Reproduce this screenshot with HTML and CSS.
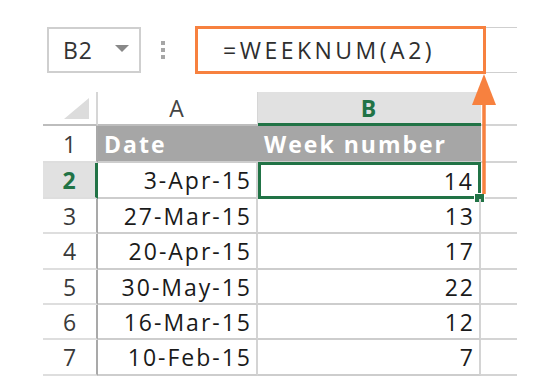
FILE: index.html
```html
<!DOCTYPE html>
<html>
<head>
<meta charset="utf-8">
<link rel="stylesheet" href="styles.css">
</head>
<body>
<div class="page">
  <div class="toolbar">
    <div class="namebox">
      <span class="name">B2</span>
      <span class="caret"></span>
    </div>
    <div class="dots"><i></i><i></i><i></i></div>
    <div class="formula">=WEEKNUM(A2)</div>
    <div class="tail"></div>
  </div>
  <div class="sheet">
    <div class="corner"><span class="tri"></span></div>
    <div class="colhead">A</div>
    <div class="colhead active">B</div>
    <div class="filler head"></div>

    <div class="rowhead">1</div>
    <div class="cell title">Date</div>
    <div class="cell title">Week number</div>
    <div class="filler"></div>

    <div class="rowhead active">2</div>
    <div class="cell num">3-Apr-15</div>
    <div class="cell num sel">14<span class="handle"></span></div>
    <div class="filler"></div>

    <div class="rowhead">3</div>
    <div class="cell num">27-Mar-15</div>
    <div class="cell num">13</div>
    <div class="filler"></div>

    <div class="rowhead">4</div>
    <div class="cell num">20-Apr-15</div>
    <div class="cell num">17</div>
    <div class="filler"></div>

    <div class="rowhead">5</div>
    <div class="cell num">30-May-15</div>
    <div class="cell num">22</div>
    <div class="filler"></div>

    <div class="rowhead">6</div>
    <div class="cell num">16-Mar-15</div>
    <div class="cell num">12</div>
    <div class="filler"></div>

    <div class="rowhead">7</div>
    <div class="cell num">10-Feb-15</div>
    <div class="cell num">7</div>
    <div class="filler"></div>
  </div>
  <svg class="arrow" width="30" height="125" viewBox="0 0 30 125">
    <line x1="15" y1="28" x2="15" y2="120" stroke="#f7813f" stroke-width="3.5"/>
    <polygon points="15,0 3,31 27,31" fill="#f7813f"/>
  </svg>
</div>
</body>
</html>
```
FILE: styles.css
```css
* { box-sizing: border-box; }
html, body { margin: 0; padding: 0; background: #fff; }
body {
  width: 547px;
  height: 388px;
  overflow: hidden;
  font-family: "Open Sans", "Liberation Sans", sans-serif;
  color: #262626;
}
.page { position: relative; width: 547px; height: 388px; }

.toolbar {
  display: flex;
  align-items: center;
  padding-top: 26px;
  padding-left: 47px;
  height: 74px;
}
.namebox {
  width: 94px;
  height: 46px;
  border: 2px solid #cfcfcf;
  display: flex;
  align-items: center;
  padding-left: 14px;
  font-size: 23px;
  font-weight: 500;
  letter-spacing: 1px;
  color: #333;
}
.name { width: 52px; }
.caret {
  width: 0; height: 0;
  border-left: 7px solid transparent;
  border-right: 7px solid transparent;
  border-top: 7px solid #888;
  margin-top: -4px;
}
.dots {
  width: 44px;
  margin-right: 10px;
  display: flex;
  flex-direction: column;
  align-items: center;
  gap: 3px;
}
.dots i { display: block; width: 4px; height: 4px; background: #a6a6a6; }
.formula {
  width: 291px;
  height: 48px;
  border: 3px solid #f7813f;
  display: flex;
  align-items: center;
  padding-left: 25px;
  font-size: 23px;
  font-weight: 500;
  letter-spacing: 3.5px;
  color: #2e2e2e;
}
.tail {
  width: 31px;
  height: 46px;
  border-top: 1px solid #cfcfcf;
  border-bottom: 1px solid #cfcfcf;
}

.sheet {
  margin-top: 18px;
  margin-left: 43px;
  display: grid;
  grid-template-columns: 55px 160px 223px 36px;
  grid-template-rows: 34px 37px 36px 35px 36px 35px 35px 36px;
  font-size: 23px;
  letter-spacing: 2px;
}
.corner {
  position: relative;
  border-right: 2px solid #d6d6d6;
  border-bottom: 2px solid #bdbdbd;
}
.tri {
  position: absolute;
  right: 7px;
  bottom: 5px;
  width: 0; height: 0;
  border-left: 25px solid transparent;
  border-bottom: 21px solid #dcdcdc;
}
.colhead {
  display: flex;
  align-items: center;
  justify-content: center;
  color: #444;
  font-weight: 500;
  border-right: 1px solid #d6d6d6;
  border-bottom: 2px solid #bdbdbd;
}
.colhead.active {
  background: #e1e1e1;
  color: #217346;
  font-weight: 700;
  border-bottom: 3px solid #217346;
  border-right: none;
}
.filler { border-bottom: 2px solid #d4d4d4; }
.filler.head { border-bottom: 2px solid #d4d4d4; }

.rowhead {
  display: flex;
  align-items: center;
  justify-content: center;
  color: #3a3a3a;
  border-right: 2px solid #a9a9a9;
  border-bottom: 2px solid #dedede;
  letter-spacing: 0;
}
.rowhead.active {
  background: #e1e1e1;
  color: #217346;
  font-weight: 700;
  border-right: 3px solid #217346;
}
.cell {
  display: flex;
  align-items: center;
  padding: 0 6px;
  border-right: 2px solid #d4d4d4;
  border-bottom: 2px solid #cdcdcd;
  white-space: nowrap;
  position: relative;
}
.cell.num {
  justify-content: flex-end;
  padding-right: 4px;
  color: #1a1a1a;
  font-weight: 500;
}
.cell.title {
  background: #a6a6a6;
  color: #fff;
  font-weight: 700;
  border-right: none;
  padding-left: 6px;
}
.cell.sel {
  border: 3px solid #217346;
  margin-top: -1px;
}
.handle {
  position: absolute;
  right: -7px;
  bottom: -7px;
  width: 11px;
  height: 10px;
  background: #217346;
  border: 1px solid #fff;
}
.arrow {
  position: absolute;
  left: 469px;
  top: 74px;
}
```
